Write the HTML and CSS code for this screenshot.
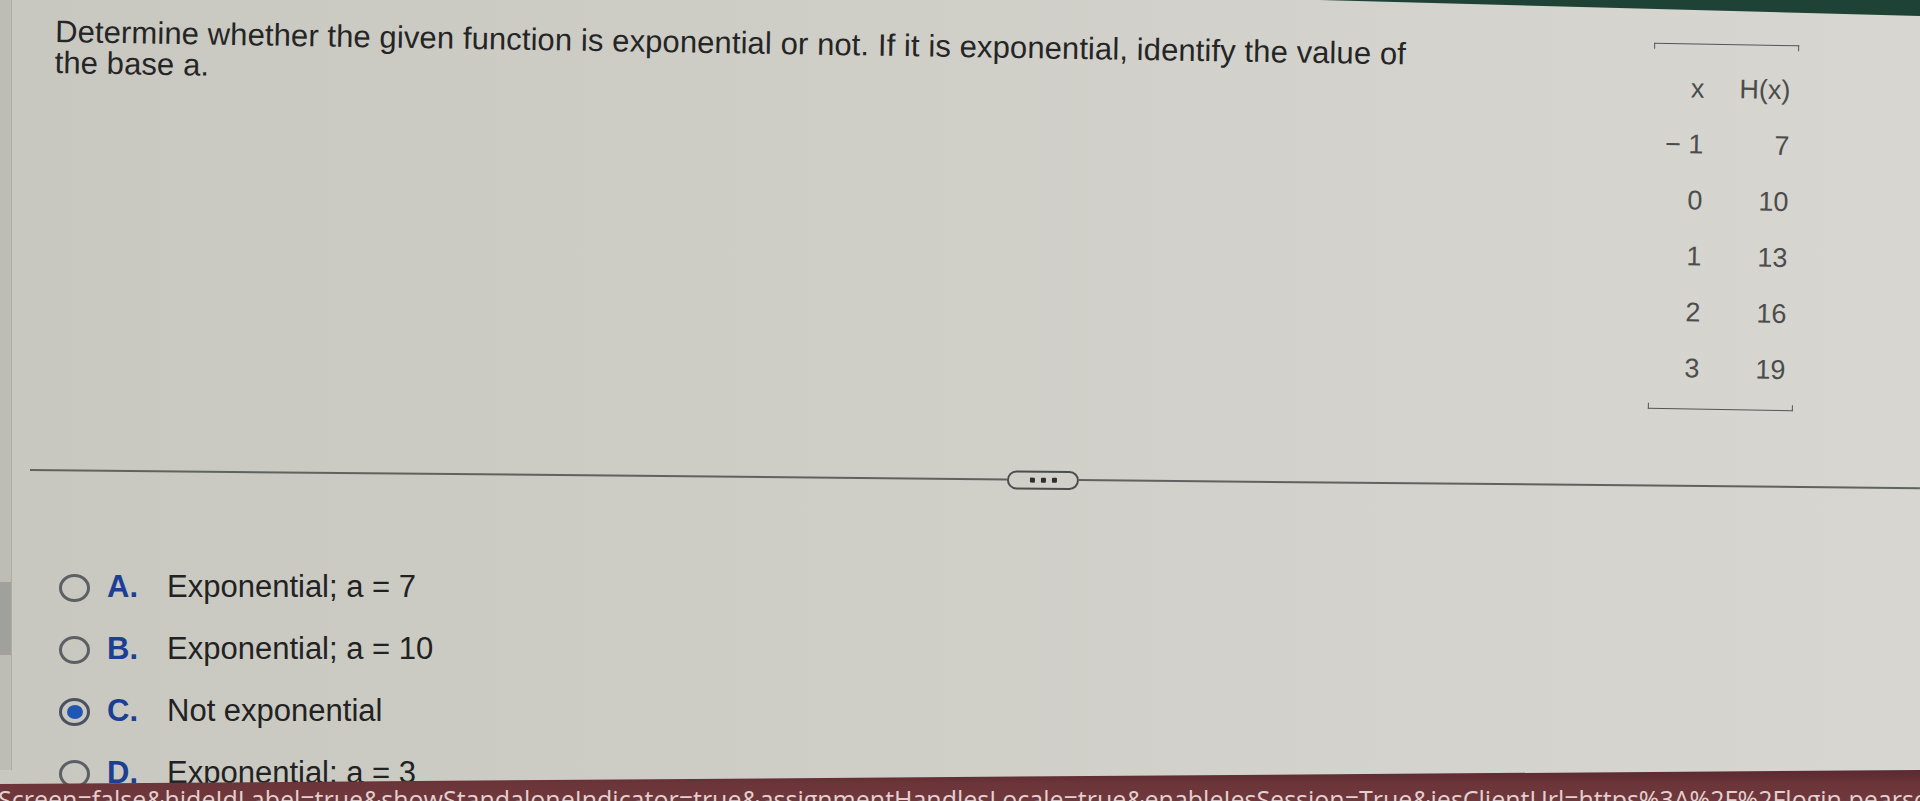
FILE: index.html
```html
<!DOCTYPE html>
<html lang="en">
<head>
<meta charset="utf-8">
<title>Exponential function question</title>
<link rel="stylesheet" href="styles.css">
</head>
<body>
<div class="screen">
  <div class="topband"></div>
  <div class="content">
    <aside class="strip"><div class="thumb"></div></aside>
    <main class="main">
      <section class="question-area">
        <p class="question">Determine whether the given function is exponential or not. If it is exponential, identify the value of<br>the base a.</p>
        <div class="tbl">
          <div class="tbl-top"></div>
          <div class="tbl-grid">
            <span>x</span><span>H(x)</span>
            <span>− 1</span><span>7</span>
            <span>0</span><span>10</span>
            <span>1</span><span>13</span>
            <span>2</span><span>16</span>
            <span>3</span><span>19</span>
          </div>
          <div class="tbl-bottom"></div>
        </div>
      </section>
      <div class="divider">
        <span class="line line-left"></span>
        <span class="more"><i></i><i></i><i></i></span>
        <span class="line line-right"></span>
      </div>
      <ul class="options">
        <li class="opt"><span class="radio"></span><span class="letter">A.</span><span class="txt">Exponential; a = 7</span></li>
        <li class="opt"><span class="radio"></span><span class="letter">B.</span><span class="txt">Exponential; a = 10</span></li>
        <li class="opt"><span class="radio on"></span><span class="letter">C.</span><span class="txt">Not exponential</span></li>
        <li class="opt"><span class="radio"></span><span class="letter">D.</span><span class="txt">Exponential; a = 3</span></li>
      </ul>
    </main>
  </div>
  <footer class="urlbar"><span class="url">isFullScreen=false&amp;hideIdLabel=true&amp;showStandaloneIndicator=true&amp;assignmentHandlesLocale=true&amp;enableIesSession=True&amp;iesClientUrl=https%3A%2F%2Flogin.pearson.com%2Flogin</span></footer>
</div>
</body>
</html>
```

FILE: styles.css
```css
* { box-sizing: border-box; margin: 0; padding: 0; }
html, body { width: 1920px; height: 801px; overflow: hidden; }
body {
  font-family: "Liberation Sans", Arial, sans-serif;
  background: #cfcfc8;
  color: #262626;
}
.screen {
  position: relative;
  height: 801px;
  display: flex;
  flex-direction: column;
  overflow: hidden;
  background: linear-gradient(90deg, #c8c8c1 0%, #cdcdc6 35%, #d3d2cc 70%, #d7d6d0 100%);
}
.topband {
  position: absolute;
  top: 0;
  right: 0;
  width: 600px;
  height: 16px;
  background: #1e4336;
  clip-path: polygon(0 0, 100% 0, 100% 100%);
  z-index: 2;
}
.content { flex: 1; min-height: 0; display: flex; }
.strip {
  width: 12px;
  flex-shrink: 0;
  background: #bdbdb6;
  border-right: 1px solid #adada7;
  padding-top: 582px;
}
.thumb { height: 73px; background: #a1a19c; }
.main { flex: 1; min-width: 0; display: flex; flex-direction: column; }

.question-area { height: 460px; flex-shrink: 0; display: flex; align-items: flex-start; }
.question {
  flex: 1;
  padding: 16px 0 0 43px;
  font-size: 31px;
  line-height: 31px;
  letter-spacing: 0.1px;
  color: #252525;
  transform: rotate(0.95deg);
  transform-origin: 43px 42px;
}
.tbl {
  width: 145px;
  margin: 44px 124px 0 0;
  color: #4c4c4c;
  transform: rotate(1deg);
}
.tbl-top { height: 6px; border: 1.5px solid #555; border-bottom: 0; }
.tbl-bottom { height: 6px; border: 1.5px solid #555; border-top: 0; }
.tbl-grid {
  display: grid;
  grid-template-columns: 51px 86px;
  padding: 11px 0 7px;
  font-size: 27px;
  line-height: 56px;
  text-align: right;
}

.divider {
  height: 20px;
  flex-shrink: 0;
  display: flex;
  align-items: center;
  transform: rotate(0.55deg);
  transform-origin: 18px 10px;
}
.line { height: 2px; background: #5f625e; }
.line-left { width: 977px; margin-left: 18px; }
.line-right { flex: 1; }
.more {
  width: 72px;
  height: 19px;
  border: 2px solid #4b4e4b;
  border-radius: 10px;
  display: flex;
  align-items: center;
  justify-content: center;
  gap: 6px;
}
.more i { width: 5px; height: 5px; background: #2e2e2e; border-radius: 1px; }

.options { list-style: none; flex: 1; min-height: 0; padding: 75px 0 0 47px; }
.opt { height: 62px; display: flex; align-items: center; font-size: 31px; line-height: 31px; }
.radio {
  width: 31px;
  height: 28px;
  flex-shrink: 0;
  margin: 4px 17px 0 0;
  border: 3px solid #5c6065;
  border-radius: 50%;
}
.radio.on {
  border: 3px solid #4a5262;
  display: flex;
  align-items: center;
  justify-content: center;
}
.radio.on::after {
  content: "";
  width: 16px;
  height: 14px;
  border-radius: 50%;
  background: #1f56b3;
}
.letter { width: 60px; font-weight: bold; color: #1c3f91; }
.txt { color: #222; }

.urlbar {
  height: 31px;
  flex-shrink: 0;
  position: relative;
  z-index: 1;
  padding-top: 19px;
  overflow: hidden;
  white-space: nowrap;
  text-indent: -61px;
  background: linear-gradient(#5a292e, #6c353a 45%, #6e383c);
  clip-path: polygon(0 14px, 100% 0, 100% 100%, 0 100%);
  font-family: "Open Sans", "Noto Sans", sans-serif;
  font-size: 25px;
  line-height: 20px;
  color: #e4d0d0;
}
```
